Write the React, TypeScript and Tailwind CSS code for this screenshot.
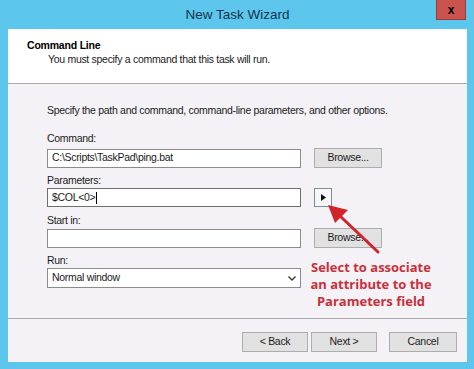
import React from "react"

const ui = { fontFamily: '"Liberation Sans", Arial, sans-serif' }

function Btn({ w, children }: { w: string; children: React.ReactNode }) {
  return (
    <div
      className={`${w} h-[20px] flex items-center justify-center bg-[#e1e1e1] border border-[#adadad] text-[10.5px] tracking-[-0.3px] text-[#1b1b1b]`}
    >
      {children}
    </div>
  )
}

function Field({ value }: { value?: string }) {
  return (
    <div className="w-[254px] h-[19px] bg-white border border-[#8b8b8b] flex items-center px-[4px] text-[10.5px] tracking-[-0.3px] text-[#1b1b1b]">
      {value}
    </div>
  )
}

function Label({ children, mt }: { children: React.ReactNode; mt: string }) {
  return (
    <div className={`${mt} h-[14px] leading-[14px] text-[10.5px] tracking-[-0.3px] text-[#1b1b1b]`}>
      {children}
    </div>
  )
}

export default function App() {
  return (
    <div
      className="w-[474px] h-[369px] bg-[#5cc6ec] flex flex-col pl-[8px] pr-[7px] pb-[7px] overflow-hidden"
      style={ui}
    >
      {/* title bar */}
      <div className="relative h-[29px] flex items-center justify-center shrink-0">
        <span className="text-[13.5px] text-[#14344f] pt-[2px]">New Task Wizard</span>
        <div className="absolute right-[1px] top-0 w-[30px] h-[20px] bg-[#c9534e] border border-[#9e3b37] border-t-0 flex items-center justify-center">
          <span className="text-[12px] font-bold text-black leading-none">x</span>
        </div>
      </div>

      {/* header */}
      <div className="h-[55px] bg-white border-b border-[#a9a9a9] pl-[19px] pt-[9px] shrink-0">
        <div className="text-[10.5px] tracking-[-0.2px] font-bold text-black leading-[14px]">Command Line</div>
        <div className="pl-[21px] text-[10.5px] tracking-[-0.3px] text-[#1b1b1b] leading-[14px]">
          You must specify a command that this task will run.
        </div>
      </div>

      {/* body */}
      <div className="relative flex-1 bg-[#f4f2f6] pl-[39px]">
        <Label mt="mt-[19px]">Specify the path and command, command-line parameters, and other options.</Label>

        <Label mt="mt-[14px]">Command:</Label>
        <div className="flex items-center gap-[13px] mt-[3px]">
          <Field value="C:\Scripts\TaskPad\ping.bat" />
          <Btn w="w-[68px]">Browse...</Btn>
        </div>

        <Label mt="mt-[5px]">Parameters:</Label>
        <div className="flex items-center gap-[13px] mt-[1px]">
          <div className="w-[254px] h-[19px] bg-white border border-[#6f6f6f] flex items-center px-[4px] text-[10.5px] tracking-[-0.3px] text-[#1b1b1b]">
            $COL&lt;0&gt;<span className="w-px h-[12px] bg-black ml-[1px]" />
          </div>
          <div className="w-[18px] h-[19px] bg-[#f7f7f7] border border-[#7e8c99] flex items-center justify-center">
            <svg width="5" height="7" viewBox="0 0 5 7">
              <path d="M0 0 L5 3.5 L0 7 Z" fill="#111" />
            </svg>
          </div>
        </div>

        <Label mt="mt-[6px]">Start in:</Label>
        <div className="flex items-center gap-[13px] mt-[1px]">
          <Field />
          <Btn w="w-[68px]">Browse...</Btn>
        </div>

        <Label mt="mt-[5px]">Run:</Label>
        <div className="mt-[1px] w-[254px] h-[20px] bg-white border border-[#8b8b8b] flex items-center justify-between px-[4px] text-[10.5px] tracking-[-0.3px] text-[#1b1b1b]">
          <span>Normal window</span>
          <svg width="8" height="5" viewBox="0 0 8 5">
            <path d="M0.5 0.5 L4 4 L7.5 0.5" stroke="#333" strokeWidth="1.3" fill="none" />
          </svg>
        </div>

        {/* annotation */}
        <div
          className="absolute left-[298px] top-[175px] w-[130px] text-center whitespace-nowrap text-[13px] leading-[17px] font-bold text-[#c8303b]"
          style={{ fontFamily: '"Open Sans", "Noto Sans", sans-serif' }}
        >
          Select to associate
          <br />
          an attribute to the
          <br />
          Parameters field
        </div>
        <svg className="absolute left-[310px] top-[112px]" width="70" height="60" viewBox="0 0 70 60">
          <path d="M60 56 L22 20" stroke="#d0232c" strokeWidth="3" strokeLinecap="round" />
          <path d="M10 9 L30 14 L17 27 Z" fill="#d0232c" />
        </svg>
      </div>

      {/* footer */}
      <div className="h-[44px] bg-[#f4f2f6] border-t border-[#a9a9a9] flex items-start justify-end pt-[13px] pr-[10px] shrink-0">
        <Btn w="w-[66px]">&lt; Back</Btn>
        <div className="w-[3px]" />
        <Btn w="w-[66px]">Next &gt;</Btn>
        <div className="w-[12px]" />
        <Btn w="w-[68px]">Cancel</Btn>
      </div>
    </div>
  )
}
